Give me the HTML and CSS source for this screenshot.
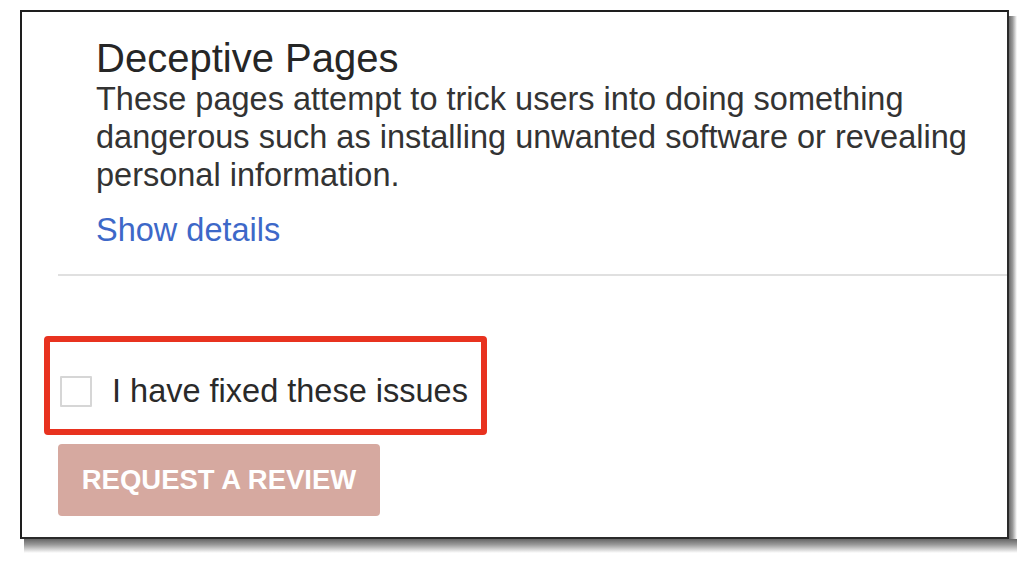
FILE: index.html
```html
<!DOCTYPE html>
<html lang="en">
<head>
<meta charset="utf-8">
<title>Deceptive Pages</title>
<link rel="stylesheet" href="styles.css">
</head>
<body>
<div class="page">
  <div class="card">
    <div class="issue">
      <h2 class="issue-title">Deceptive Pages</h2>
      <p class="issue-text">These pages attempt to trick users into doing something dangerous such as installing unwanted software or revealing personal information.</p>
      <a class="issue-link" href="#">Show details</a>
    </div>
    <div class="divider"></div>
    <label class="fixbox">
      <span class="checkbox"></span>
      <span class="fix-label">I have fixed these issues</span>
    </label>
    <button class="review-btn" type="button">REQUEST A REVIEW</button>
  </div>
</div>
</body>
</html>
```
FILE: styles.css
```css
html, body {
  margin: 0;
  padding: 0;
  background: #ffffff;
  font-family: "Liberation Sans", Arial, sans-serif;
}

.page {
  box-sizing: border-box;
  width: 1020px;
  height: 570px;
  padding: 10px 0 0 20px;
  overflow: hidden;
}

.card {
  position: relative;
  box-sizing: border-box;
  width: 989px;
  height: 529px;
  border: 2px solid #1e1e1e;
  border-color: #1e1e1e #2a2a2a #2a2a2a #1e1e1e;
  background: #ffffff;
  padding: 26px 0 0 36px;
}

/* drop shadow strips */
.card::before {
  content: "";
  position: absolute;
  top: 4px;
  right: -10px;
  width: 8px;
  bottom: -4px;
  background: linear-gradient(to right, #6a6a6a, #9a9a9a 45%, rgba(255, 255, 255, 0));
}

.card::after {
  content: "";
  position: absolute;
  left: 2px;
  right: -10px;
  bottom: -16px;
  height: 14px;
  background: linear-gradient(to bottom, #666666, #999999 40%, rgba(255, 255, 255, 0));
}

.issue {
  padding-left: 38px;
}

.issue-title {
  margin: 0;
  font-size: 40px;
  line-height: 40px;
  font-weight: normal;
  color: #262626;
}

.issue-text {
  margin: 2px 0 0 0;
  font-size: 32.5px;
  line-height: 38px;
  color: #333333;
  width: 900px;
}

.issue-link {
  display: inline-block;
  margin-top: 17px;
  font-size: 32.5px;
  line-height: 38px;
  color: #3d68c8;
  text-decoration: none;
}

.divider {
  margin-top: 25px;
  border-top: 2px solid #e0e0e0;
}

.fixbox {
  box-sizing: border-box;
  display: flex;
  align-items: center;
  gap: 20px;
  margin: 60px 0 0 -14px;
  width: 443px;
  height: 99px;
  border: 6px solid #e8321f;
  border-radius: 4px;
  padding: 11px 0 0 10px;
}

.checkbox {
  box-sizing: border-box;
  width: 32px;
  height: 31px;
  border: 2px solid #d6d6d6;
  border-radius: 1px;
  flex: none;
}

.fix-label {
  font-size: 32.5px;
  color: #2a2a2a;
}

.review-btn {
  display: block;
  margin-top: 9px;
  width: 322px;
  height: 72px;
  border: none;
  border-radius: 4px;
  background: #d6a9a0;
  color: #ffffff;
  font-family: "Liberation Sans", Arial, sans-serif;
  font-weight: bold;
  font-size: 27.5px;
  padding: 0;
}
```
